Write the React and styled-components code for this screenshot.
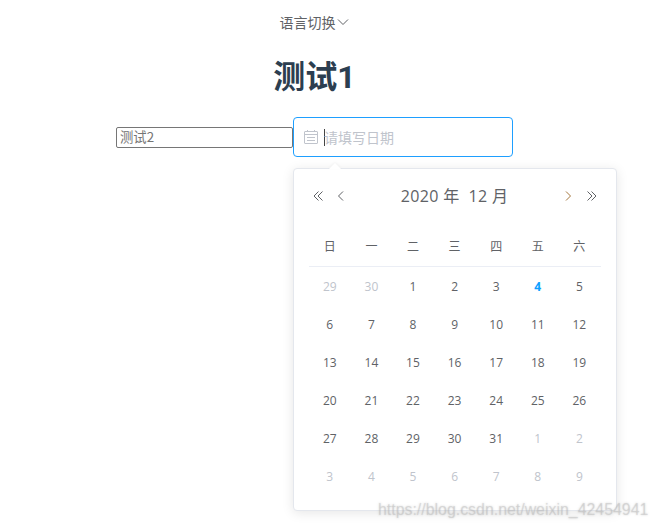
import React from 'react'
import styled, { createGlobalStyle } from 'styled-components'

const GlobalStyle = createGlobalStyle`
  html, body {
    margin: 0;
    padding: 0;
    background: #fff;
  }
  body {
    font-family: "Open Sans", "Noto Sans CJK SC", sans-serif;
    overflow: hidden;
  }
`

const Page = styled.div`
  position: relative;
  width: 629px;
  height: 528px;
  display: flex;
  flex-direction: column;
  align-items: center;
  padding-top: 13px;
  box-sizing: border-box;
`

const LangSwitch = styled.div`
  display: flex;
  align-items: center;
  height: 18px;
  font-size: 14px;
  line-height: 18px;
  color: #606266;
  font-family: "Noto Sans CJK SC", sans-serif;
`

const Title = styled.h1`
  margin: 27px 0 0;
  font-size: 32px;
  line-height: 38px;
  font-weight: 700;
  color: #2c3e50;
  font-family: Roboto, "Noto Sans CJK SC", sans-serif;
`

const FormRow = styled.div`
  position: relative;
  margin-top: 21px;
  display: flex;
  align-items: center;
`

const NativeInput = styled.input`
  width: 177px;
  height: 21px;
  box-sizing: border-box;
  padding: 0 3px 2px;
  border: 1px solid #767676;
  border-radius: 2px;
  font-size: 13.33px;
  font-family: "Noto Sans CJK SC", "Liberation Sans", sans-serif;
  color: #757575;
  outline: none;
  &::placeholder { color: #757575; }
`

const DateInput = styled.div`
  display: flex;
  align-items: center;
  width: 220px;
  height: 40px;
  box-sizing: border-box;
  border: 1px solid #1e9fff;
  border-radius: 4px;
  padding-left: 10px;
  background: #fff;
`

const Caret = styled.span`
  width: 1px;
  height: 17px;
  margin: 0 -1px 0 6px;
  background: #444;
`

const Placeholder = styled.span`
  font-size: 14px;
  color: #c0c4cc;
  font-family: "Noto Sans CJK SC", sans-serif;
`

const Panel = styled.div`
  position: absolute;
  left: 177px;
  top: 51px;
  width: 324px;
  height: 343px;
  box-sizing: border-box;
  padding: 0 15px;
  background: #fff;
  border: 1px solid #e4e7ed;
  border-radius: 4px;
  box-shadow: 0 2px 12px 0 rgba(0, 0, 0, 0.1);
  &::before {
    content: "";
    position: absolute;
    left: 35px;
    top: -6px;
    border-left: 6px solid transparent;
    border-right: 6px solid transparent;
    border-bottom: 6px solid #fff;
    filter: drop-shadow(0 -1px 1px rgba(0, 0, 0, 0.04));
  }
`

const PanelHeader = styled.div`
  display: flex;
  align-items: center;
  justify-content: space-between;
  height: 54px;
  padding: 0 4px;
  color: #606266;
`

const ArrowGroup = styled.div`
  display: flex;
  align-items: center;
  gap: ${(props) => props.$gap}px;
`

const Month = styled.div`
  flex: 1;
  text-align: center;
  font-size: 16px;
  line-height: 22px;
  letter-spacing: 0.35px;
  color: #606266;
  white-space: pre;
`

const Grid = styled.div`
  display: grid;
  grid-template-columns: repeat(7, 41.6px);
  width: 292px;
`

const WeekHead = styled(Grid)`
  margin-top: 3px;
  height: 40px;
  align-items: center;
  border-bottom: 1px solid #ebeef5;
`

const WeekDay = styled.div`
  text-align: center;
  font-size: 12px;
  line-height: 20px;
  color: #606266;
  font-family: "Noto Sans CJK SC", sans-serif;
  padding-bottom: 1px;
`

const Day = styled.div`
  height: 38px;
  display: flex;
  align-items: center;
  justify-content: center;
  font-size: 12px;
  color: ${(props) => (props.$today ? '#0d9fff' : props.$muted ? '#c0c4cc' : '#606266')};
  font-weight: ${(props) => (props.$today ? 700 : 400)};
`

const Watermark = styled.div`
  position: absolute;
  left: 378px;
  top: 500px;
  font-family: "Liberation Sans", sans-serif;
  font-size: 15.9px;
  line-height: 20px;
  color: rgba(170, 170, 170, 0.3);
  text-shadow: 0 0 2px rgba(170, 170, 170, 0.5);
  white-space: nowrap;
`

const ChevronDown = () => (
  <svg width="14" height="12" viewBox="0 0 14 12" fill="none" stroke="#606266" strokeWidth="1">
    <path d="M2 3.5 7 8.5l5-5" />
  </svg>
)

const CalendarIcon = () => (
  <svg width="14" height="14" viewBox="0 0 14 14" fill="none" stroke="#c0c4cc" strokeWidth="1">
    <rect x="0.5" y="1.5" width="13" height="12" rx="0.5" />
    <path d="M0.5 4.5h13M3 7.5h8M3 10.5h8M3.5 0v2M10.5 0v2" />
  </svg>
)

const Arrow = ({ dir, double, color = '#606266' }) => {
  const flip = dir === 'right' ? 'scale(-1 1) translate(-12 0)' : undefined
  return (
    <svg width="12" height="12" viewBox="0 0 12 12" fill="none" stroke={color} strokeWidth="1">
      <g transform={flip}>
        {double ? (
          <path d="M5.5 1.5 1 6l4.5 4.5M9.5 1.5 5 6l4.5 4.5" />
        ) : (
          <path d="M8 1.5 3.5 6 8 10.5" />
        )}
      </g>
    </svg>
  )
}

const weekdays = ['日', '一', '二', '三', '四', '五', '六']

const days = [
  { d: 29, muted: true }, { d: 30, muted: true },
  ...Array.from({ length: 31 }, (_, i) => ({ d: i + 1, today: i === 3 })),
  ...Array.from({ length: 9 }, (_, i) => ({ d: i + 1, muted: true })),
]

export default function App() {
  return (
    <Page>
      <GlobalStyle />
      <LangSwitch>语言切换<ChevronDown /></LangSwitch>
      <Title>测试1</Title>
      <FormRow>
        <NativeInput placeholder="测试2" />
        <DateInput>
          <CalendarIcon />
          <Caret />
          <Placeholder>请填写日期</Placeholder>
        </DateInput>
        <Panel>
          <PanelHeader>
            <ArrowGroup $gap={10}>
              <Arrow double />
              <Arrow />
            </ArrowGroup>
            <Month>2020 年  12 月</Month>
            <ArrowGroup $gap={11}>
              <Arrow dir="right" color="#a5763c" />
              <Arrow dir="right" double />
            </ArrowGroup>
          </PanelHeader>
          <WeekHead>
            {weekdays.map((w) => <WeekDay key={w}>{w}</WeekDay>)}
          </WeekHead>
          <Grid>
            {days.map((item, i) => (
              <Day key={i} $muted={item.muted} $today={item.today}>{item.d}</Day>
            ))}
          </Grid>
        </Panel>
      </FormRow>
      <Watermark>https://blog.csdn.net/weixin_42454941</Watermark>
    </Page>
  )
}
